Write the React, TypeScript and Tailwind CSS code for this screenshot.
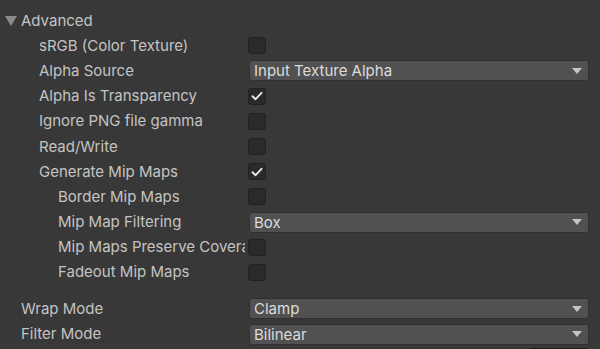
import React from "react";

const font = { fontFamily: "Inter, 'Noto Sans', sans-serif" };

function Check() {
  return (
    <svg width="12" height="10" viewBox="0 0 12 10" className="block">
      <path d="M1.5 5.2 L4.6 8.2 L10.5 1.8" fill="none" stroke="#e8e8e8" strokeWidth="1.9" strokeLinecap="round" strokeLinejoin="round" />
    </svg>
  );
}

function Checkbox({ checked }: { checked?: boolean }) {
  return (
    <div className="ml-[3px] w-[18px] h-[17px] rounded-[3px] bg-[#2a2a2a] border border-[#212121] flex items-center justify-center">
      {checked ? <Check /> : null}
    </div>
  );
}

function Dropdown({ value }: { value: string }) {
  return (
    <div className="ml-[4px] w-[340px] h-[21px] rounded-[3px] bg-[#515151] border border-[#303030] flex items-center justify-between pl-[4px] pr-[6px]">
      <span className="text-[15px] text-[#dcdcdc] leading-[19px]">{value}</span>
      <svg width="10" height="6" viewBox="0 0 10 6" className="block">
        <path d="M0 0 H10 L5 6 Z" fill="#c4c4c4" />
      </svg>
    </div>
  );
}

type Row = { label: string; indent: string; kind: "check" | "drop"; checked?: boolean; value?: string };

function FieldRow({ r }: { r: Row }) {
  return (
    <div className="flex items-center h-[25.2px]">
      <div className={`w-[245px] shrink-0 overflow-hidden whitespace-nowrap text-[15px] text-[#c4c4c4] leading-[20px] ${r.indent}`}>
        {r.label}
      </div>
      {r.kind === "check" ? <Checkbox checked={r.checked} /> : <Dropdown value={r.value || ""} />}
    </div>
  );
}

export default function App() {
  const advanced: Row[] = [
    { label: "sRGB (Color Texture)", indent: "pl-[39px]", kind: "check" },
    { label: "Alpha Source", indent: "pl-[39px]", kind: "drop", value: "Input Texture Alpha" },
    { label: "Alpha Is Transparency", indent: "pl-[39px]", kind: "check", checked: true },
    { label: "Ignore PNG file gamma", indent: "pl-[39px]", kind: "check" },
    { label: "Read/Write", indent: "pl-[39px]", kind: "check" },
    { label: "Generate Mip Maps", indent: "pl-[39px]", kind: "check", checked: true },
    { label: "Border Mip Maps", indent: "pl-[58px]", kind: "check" },
    { label: "Mip Map Filtering", indent: "pl-[58px]", kind: "drop", value: "Box" },
    { label: "Mip Maps Preserve Coverage", indent: "pl-[58px]", kind: "check" },
    { label: "Fadeout Mip Maps", indent: "pl-[58px]", kind: "check" },
  ];
  const modes: Row[] = [
    { label: "Wrap Mode", indent: "pl-[21px]", kind: "drop", value: "Clamp" },
    { label: "Filter Mode", indent: "pl-[21px]", kind: "drop", value: "Bilinear" },
  ];
  return (
    <div className="w-[600px] h-[349px] bg-[#383838] overflow-hidden pt-[8px]" style={font}>
      <div className="flex items-center h-[25.2px] pl-[5px]">
        <svg width="12" height="10" viewBox="0 0 12 10" className="block">
          <path d="M0 0 H12 L6 10 Z" fill="#8a8a8a" />
        </svg>
        <span className="ml-[4px] text-[15px] text-[#c4c4c4] leading-[20px]">Advanced</span>
      </div>
      {advanced.map((r) => (
        <FieldRow key={r.label} r={r} />
      ))}
      <div className="h-[11.2px]" />
      {modes.map((r) => (
        <FieldRow key={r.label} r={r} />
      ))}
      <div className="flex justify-end pr-[11px] pt-[1px]">
        <div className="w-[61px] h-[20px] rounded-[3px] bg-[#2a2a2a] border border-[#212121]" />
      </div>
    </div>
  );
}
